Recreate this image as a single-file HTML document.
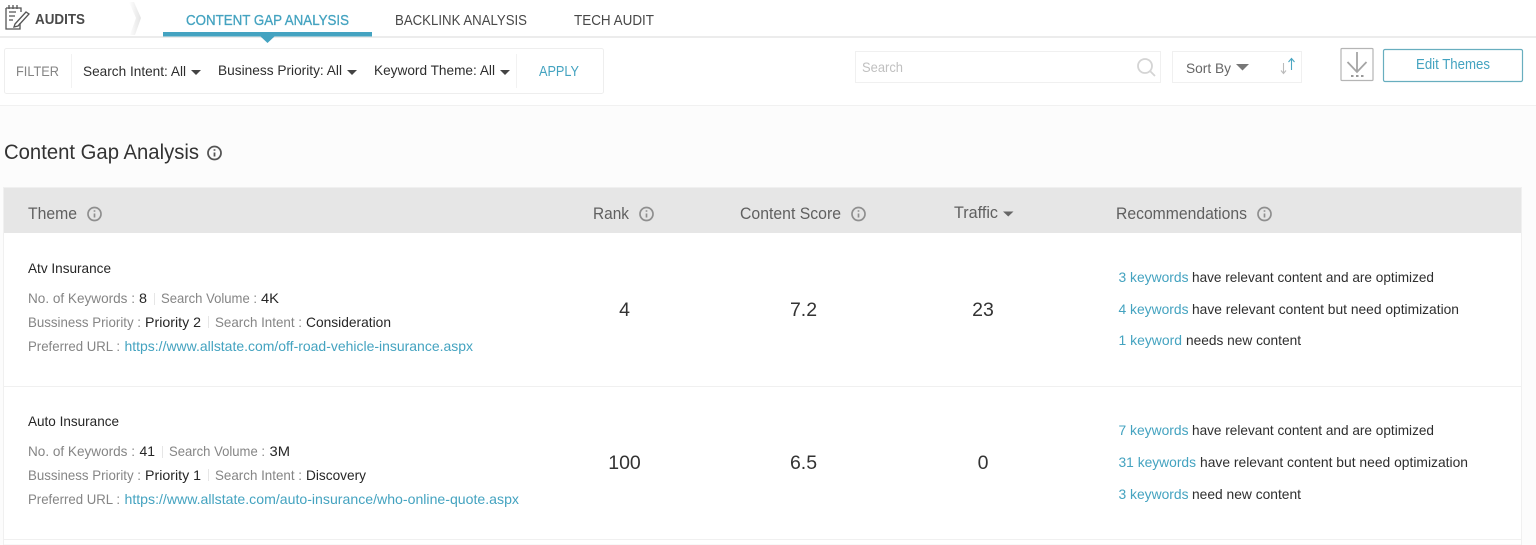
<!DOCTYPE html>
<html><head><meta charset="utf-8"><title>Content Gap Analysis</title>
<style>
html,body{margin:0;padding:0;background:#fff;width:1536px;height:545px;overflow:hidden}
svg{display:block;filter:blur(.3px)}
text{font-family:"Liberation Sans",sans-serif;font-size:14px;fill:#2e2e2e}
.g{fill:#858585}.b{fill:#44a3c0}.k{fill:#262626}
.h{font-size:16.5px;fill:#606060}
.n{font-size:19.5px;fill:#333;text-anchor:middle}
.t{font-size:14.5px;fill:#484848}
.tb{font-size:14.5px;fill:#44a3c0;stroke:#44a3c0;stroke-width:.3}
.i circle{fill:none;stroke:#8f8f8f;stroke-width:1.7}.i path{stroke:#8f8f8f;stroke-width:1.7;fill:none}
.d circle{stroke:#555;stroke-width:1.8}.d path{stroke:#555;stroke-width:1.8;fill:none}
</style></head><body>
<svg width="1536" height="545" viewBox="0 0 1536 545" xmlns="http://www.w3.org/2000/svg">
<defs>
<g id="i" class="i"><circle cx="0" cy="0" r="6.500"/><path d="M0-.5V3.500M0-3.800V-2.200"/></g>
<linearGradient id="ch" x1="0" x2="1" y1="0" y2="0"><stop offset="0" stop-color="#fff"/><stop offset="1" stop-color="#e4e4e4"/></linearGradient>
</defs>
<rect width="1536" height="545" fill="#fff"/>
<rect y="105" width="1536" height="440" fill="#fcfcfc"/>
<rect y="36" width="1536" height="2" fill="#ececec"/>
<rect y="105" width="1536" height="1" fill="#f1f1f1"/>

<!-- header -->
<g fill="none" stroke="#555" stroke-width="1.300"><path d="M6 8H21V12M6 8V29H20V23"/><path d="M9 12H16M9 16H15M9 20H13"/><path d="M15 24L26 12L29 14L18 26L14 27Z"/><path d="M9 5V9M13 5V9M17 5V9"/></g>
<text x="35" y="24" textLength="50" lengthAdjust="spacingAndGlyphs" style="font-size:14.500px;font-weight:bold;fill:#4a4a4a">AUDITS</text>
<path d="M129 2L136 18L130 35H135L141 18L134 2Z" fill="url(#ch)"/>
<text x="186" y="25" textLength="163" lengthAdjust="spacingAndGlyphs" class="tb">CONTENT GAP ANALYSIS</text>
<text x="395" y="25" textLength="132" lengthAdjust="spacingAndGlyphs" class="t">BACKLINK ANALYSIS</text>
<text x="574" y="25" textLength="80" lengthAdjust="spacingAndGlyphs" class="t">TECH AUDIT</text>
<rect x="163" y="32" width="209" height="4.500" fill="#44a3c1"/>
<path d="M260 36H275L267.500 43Z" fill="#44a3c1"/>

<!-- filter -->
<rect x="4.500" y="48.500" width="599" height="45" rx="2" fill="#fff" stroke="#eeeeee"/>
<path d="M71.500 54V88M516.500 54V88" stroke="#f2f2f2"/>
<text x="16" y="76" textLength="43" lengthAdjust="spacingAndGlyphs" class="g">FILTER</text>
<text x="83" y="76" textLength="103" lengthAdjust="spacingAndGlyphs">Search Intent: All</text>
<path d="M191 70H201L196 75Z" fill="#444"/>
<text x="218" y="75" textLength="124" lengthAdjust="spacingAndGlyphs">Business Priority: All</text>
<path d="M347 70H357L352 75Z" fill="#444"/>
<text x="374" y="75" textLength="121" lengthAdjust="spacingAndGlyphs">Keyword Theme: All</text>
<path d="M500 70H510L505 75Z" fill="#444"/>
<text x="539" y="76" textLength="40" lengthAdjust="spacingAndGlyphs" class="b" style="font-size:14.500px">APPLY</text>

<!-- search / sort -->
<rect x="855.500" y="51.500" width="305" height="31" fill="#fff" stroke="#f0f0f0"/>
<text x="862" y="72" textLength="41" lengthAdjust="spacingAndGlyphs" style="fill:#c0c0c0">Search</text>
<g fill="none" stroke="#d4d4d4" stroke-width="1.800"><circle cx="1145" cy="66" r="7"/><path d="M1150 71L1155 76"/></g>
<rect x="1172.500" y="51.500" width="129" height="31" fill="#fff" stroke="#f0f0f0"/>
<text x="1186" y="73" textLength="45" lengthAdjust="spacingAndGlyphs" style="fill:#666">Sort By</text>
<path d="M1236 64H1249L1242.500 70.500Z" fill="#777"/>
<path d="M1283.500 63V73.500M1281 70.500L1283.500 73.500L1286 70.500" fill="none" stroke="#bbb" stroke-width="1.100"/>
<path d="M1291.500 70V58.500M1288.500 62L1291.500 58.500L1294.500 62" fill="none" stroke="#4aa6c2" stroke-width="1.100"/>
<rect x="1341" y="48.500" width="32" height="32" rx="1" fill="#fff" stroke="#b5b5b5" stroke-width="1.200"/>
<path d="M1357 52V72M1347.500 62L1357 72L1366.500 62" fill="none" stroke="#a5a5a5" stroke-width="1.800"/>
<path d="M1351 76H1353.500M1356 76H1358.500M1361 76H1363.500" stroke="#999" stroke-width="2"/>
<rect x="1383.500" y="49.500" width="139" height="32" rx="1.500" fill="#fff" stroke="#68aebf" stroke-width="1.200"/>
<text x="1416" y="69" textLength="74" lengthAdjust="spacingAndGlyphs" class="b" style="font-size:14.500px">Edit Themes</text>

<!-- title -->
<text x="4" y="159" textLength="195" lengthAdjust="spacingAndGlyphs" style="font-size:21.500px;fill:#333">Content Gap Analysis</text>
<g class="d" transform="translate(214.500 153)"><circle r="6.500" fill="none"/><path d="M0-.5V3.500M0-3.800V-2.200"/></g>

<!-- table -->
<rect x="3.500" y="187.500" width="1518" height="357.500" fill="#fff" stroke="#f0f0f0"/>
<rect x="4" y="188" width="1517" height="45" fill="#e6e6e6"/>
<text x="28" y="219" textLength="49" lengthAdjust="spacingAndGlyphs" class="h">Theme</text>
<use href="#i" x="94.500" y="214"/>
<text x="593" y="219" textLength="36" lengthAdjust="spacingAndGlyphs" class="h">Rank</text>
<use href="#i" x="646.500" y="214"/>
<text x="740" y="219" textLength="101" lengthAdjust="spacingAndGlyphs" class="h">Content Score</text>
<use href="#i" x="858.500" y="214"/>
<text x="954" y="218" textLength="44" lengthAdjust="spacingAndGlyphs" class="h">Traffic</text>
<path d="M1003 211.500H1013.500L1008.250 216.500Z" fill="#666"/>
<text x="1116" y="219" textLength="131" lengthAdjust="spacingAndGlyphs" class="h">Recommendations</text>
<use href="#i" x="1264.500" y="214"/>

<!-- row 1 -->
<text x="28" y="273" textLength="83" lengthAdjust="spacingAndGlyphs" class="k">Atv Insurance</text>
<text x="28" y="303" textLength="107" lengthAdjust="spacingAndGlyphs" class="g">No. of Keywords :</text>
<text x="139" y="303" textLength="8" lengthAdjust="spacingAndGlyphs" class="k">8</text>
<path d="M154.500 293V305" stroke="#e6e6e6"/>
<text x="161" y="303" textLength="96" lengthAdjust="spacingAndGlyphs" class="g">Search Volume :</text>
<text x="261" y="303" textLength="18" lengthAdjust="spacingAndGlyphs" class="k">4K</text>
<text x="28" y="327" textLength="113" lengthAdjust="spacingAndGlyphs" class="g">Bussiness Priority :</text>
<text x="145" y="327" textLength="56" lengthAdjust="spacingAndGlyphs" class="k">Priority 2</text>
<path d="M208.500 316V328" stroke="#e6e6e6"/>
<text x="215" y="327" textLength="87" lengthAdjust="spacingAndGlyphs" class="g">Search Intent :</text>
<text x="306" y="327" textLength="85" lengthAdjust="spacingAndGlyphs" class="k">Consideration</text>
<text x="28" y="351" textLength="92" lengthAdjust="spacingAndGlyphs" class="g">Preferred URL :</text>
<text x="124.500" y="351" textLength="348.500" lengthAdjust="spacingAndGlyphs" class="b">https://www.allstate.com/off-road-vehicle-insurance.aspx</text>
<text x="624.500" y="316" class="n">4</text>
<text x="803.500" y="316" class="n">7.2</text>
<text x="983" y="316" class="n">23</text>
<text x="1118.500" y="282" textLength="70" lengthAdjust="spacingAndGlyphs" class="b">3 keywords</text>
<text x="1192" y="282" textLength="242" lengthAdjust="spacingAndGlyphs">have relevant content and are optimized</text>
<text x="1118.500" y="314" textLength="70" lengthAdjust="spacingAndGlyphs" class="b">4 keywords</text>
<text x="1192" y="314" textLength="267" lengthAdjust="spacingAndGlyphs">have relevant content but need optimization</text>
<text x="1118.500" y="345" textLength="63.500" lengthAdjust="spacingAndGlyphs" class="b">1 keyword</text>
<text x="1186" y="345" textLength="115" lengthAdjust="spacingAndGlyphs">needs new content</text>
<rect x="4" y="386" width="1517" height="1" fill="#f0f0f0"/>

<!-- row 2 -->
<text x="28" y="426" textLength="91" lengthAdjust="spacingAndGlyphs" class="k">Auto Insurance</text>
<text x="28" y="456" textLength="107" lengthAdjust="spacingAndGlyphs" class="g">No. of Keywords :</text>
<text x="139.500" y="456" textLength="15.500" lengthAdjust="spacingAndGlyphs" class="k">41</text>
<path d="M162.500 446V458" stroke="#e6e6e6"/>
<text x="169" y="456" textLength="96" lengthAdjust="spacingAndGlyphs" class="g">Search Volume :</text>
<text x="269.500" y="456" textLength="20.500" lengthAdjust="spacingAndGlyphs" class="k">3M</text>
<text x="28" y="480" textLength="113" lengthAdjust="spacingAndGlyphs" class="g">Bussiness Priority :</text>
<text x="145" y="480" textLength="56" lengthAdjust="spacingAndGlyphs" class="k">Priority 1</text>
<path d="M208.500 469V481" stroke="#e6e6e6"/>
<text x="215" y="480" textLength="87" lengthAdjust="spacingAndGlyphs" class="g">Search Intent :</text>
<text x="306" y="480" textLength="60" lengthAdjust="spacingAndGlyphs" class="k">Discovery</text>
<text x="28" y="504" textLength="92" lengthAdjust="spacingAndGlyphs" class="g">Preferred URL :</text>
<text x="124.500" y="504" textLength="394.500" lengthAdjust="spacingAndGlyphs" class="b">https://www.allstate.com/auto-insurance/who-online-quote.aspx</text>
<text x="624.500" y="469" class="n">100</text>
<text x="803.500" y="469" class="n">6.5</text>
<text x="983" y="469" class="n">0</text>
<text x="1118.500" y="435" textLength="70" lengthAdjust="spacingAndGlyphs" class="b">7 keywords</text>
<text x="1192" y="435" textLength="242" lengthAdjust="spacingAndGlyphs">have relevant content and are optimized</text>
<text x="1118.500" y="467" textLength="77.500" lengthAdjust="spacingAndGlyphs" class="b">31 keywords</text>
<text x="1200" y="467" textLength="268" lengthAdjust="spacingAndGlyphs">have relevant content but need optimization</text>
<text x="1118.500" y="499" textLength="70" lengthAdjust="spacingAndGlyphs" class="b">3 keywords</text>
<text x="1192" y="499" textLength="109" lengthAdjust="spacingAndGlyphs">need new content</text>
<rect x="4" y="539" width="1517" height="1" fill="#f0f0f0"/>
</svg>
</body></html>
